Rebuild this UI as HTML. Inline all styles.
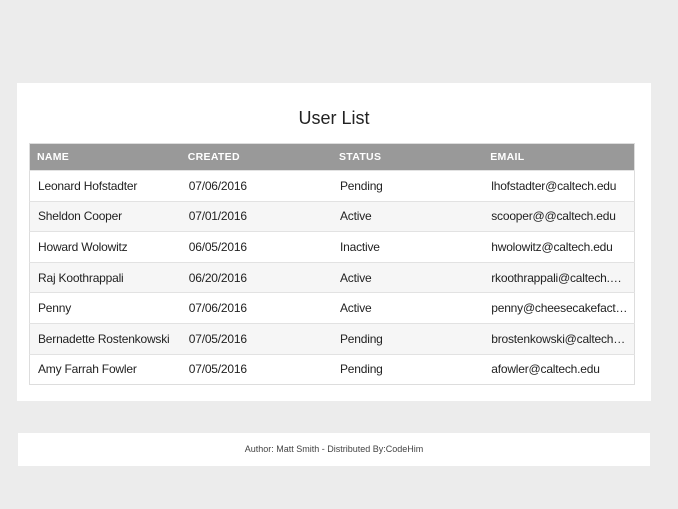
<!DOCTYPE html>
<html><head><style>
html,body{margin:0;padding:0;background:#ececec;width:678px;height:509px;overflow:hidden;font-family:"Liberation Sans",sans-serif;}
.card{position:absolute;left:17px;top:83px;width:634px;height:318px;background:#fff;}
h1{position:absolute;left:0;width:634px;top:25px;margin:0;text-align:center;font-weight:normal;font-size:18px;color:#222;}
table{position:absolute;left:12px;top:60px;width:606px;border-collapse:collapse;table-layout:fixed;border:1px solid #ddd;}
th{background:#999;color:#fff;font-size:10.5px;letter-spacing:.3px;text-align:left;height:26px;padding:0 7px;font-weight:bold;}
td{font-size:12px;letter-spacing:-0.2px;color:#222;height:29.6px;padding:0 0 0 8px;border-top:1px solid #e2e2e2;white-space:nowrap;overflow:hidden;text-overflow:ellipsis;}
td:last-child{padding-right:6px;}
tr:nth-child(odd) td{background:#f6f6f6;}
.foot{position:absolute;left:18px;top:433px;width:632px;height:33px;background:#fff;font-size:9px;color:#444;text-align:center;line-height:33px;}
</style></head><body>
<div class="card"><h1>User List</h1>
<table>
<tr><th>NAME</th><th>CREATED</th><th>STATUS</th><th>EMAIL</th></tr>
<tr><td>Leonard Hofstadter</td><td>07/06/2016</td><td>Pending</td><td>lhofstadter@caltech.edu</td></tr>
<tr><td>Sheldon Cooper</td><td>07/01/2016</td><td>Active</td><td>scooper@@caltech.edu</td></tr>
<tr><td>Howard Wolowitz</td><td>06/05/2016</td><td>Inactive</td><td>hwolowitz@caltech.edu</td></tr>
<tr><td>Raj Koothrappali</td><td>06/20/2016</td><td>Active</td><td>rkoothrappali@caltech.edu</td></tr>
<tr><td>Penny</td><td>07/06/2016</td><td>Active</td><td>penny@cheesecakefactory.com</td></tr>
<tr><td>Bernadette Rostenkowski</td><td>07/05/2016</td><td>Pending</td><td>brostenkowski@caltech.edu</td></tr>
<tr><td>Amy Farrah Fowler</td><td>07/05/2016</td><td>Pending</td><td>afowler@caltech.edu</td></tr>
</table></div>
<div class="foot">Author: Matt Smith - Distributed By:CodeHim</div>
</body></html>
